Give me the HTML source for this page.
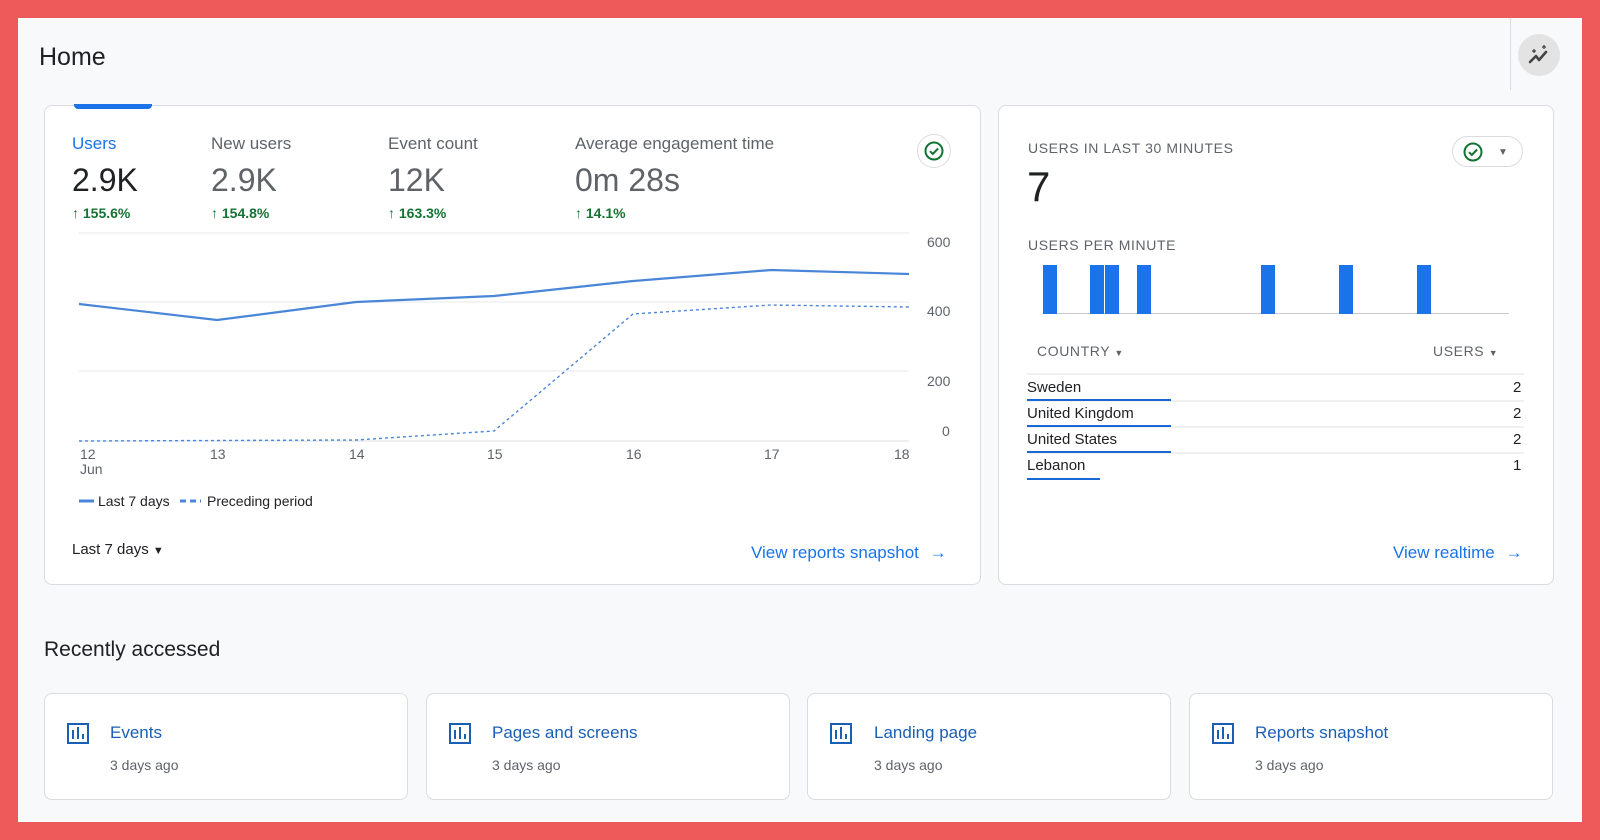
<!DOCTYPE html>
<html><head><meta charset="utf-8"><style>
*{margin:0;padding:0;box-sizing:border-box}
body{width:1600px;height:840px;background:#ee5a5a;font-family:"Liberation Sans",Arial,sans-serif;position:relative;overflow:hidden}
.a{position:absolute;white-space:nowrap}
#bg{position:absolute;left:18px;top:18px;width:1564px;height:804px;background:#f8f9fa}
.card{position:absolute;background:#fff;border:1px solid #dadce0;border-radius:8px}
.lbl{font-size:17px;color:#5f6368}
.val{font-size:32px;color:#5f6368}
.chg{font-size:14px;color:#137333;font-weight:bold}
.blue{color:#1a73e8}
.cap{font-size:14px;color:#5f6368;letter-spacing:.6px}
.row{font-size:15px;color:#202124}
</style></head><body>
<div id="bg"></div>
<div class="a" style="left:39px;top:43px;font-size:25px;color:#202124">Home</div>
<div class="a" style="left:1510px;top:18px;width:1px;height:72px;background:#dadce0"></div>
<div class="a" style="left:1518px;top:34px;width:42px;height:42px;border-radius:50%;background:#e3e3e3"></div>
<svg class="a" style="left:1526px;top:42px" width="26" height="26" viewBox="0 0 26 26"><path d="M4 20l6-6 3 4 7-8" fill="none" stroke="#444" stroke-width="2.6" stroke-linecap="round" stroke-linejoin="round"/><path d="M8 7v4M6 9h4M18 3v4M16 5h4" stroke="#444" stroke-width="1.3"/></svg>

<div class="card" style="left:44px;top:105px;width:937px;height:480px"></div>
<div class="a" style="left:74px;top:104px;width:78px;height:5px;background:#1a73e8;border-radius:0 0 4px 4px"></div>
<div class="a lbl blue" style="left:72px;top:134px;color:#1a73e8">Users</div>
<div class="a lbl" style="left:211px;top:134px">New users</div>
<div class="a lbl" style="left:388px;top:134px">Event count</div>
<div class="a lbl" style="left:575px;top:134px">Average engagement time</div>
<div class="a val" style="left:72px;top:162px;color:#202124">2.9K</div>
<div class="a val" style="left:211px;top:162px">2.9K</div>
<div class="a val" style="left:388px;top:162px">12K</div>
<div class="a val" style="left:575px;top:162px">0m 28s</div>
<div class="a chg" style="left:72px;top:205px">↑ 155.6%</div>
<div class="a chg" style="left:211px;top:205px">↑ 154.8%</div>
<div class="a chg" style="left:388px;top:205px">↑ 163.3%</div>
<div class="a chg" style="left:575px;top:205px">↑ 14.1%</div>
<div class="a" style="left:917px;top:134px;width:34px;height:34px;border-radius:50%;border:1px solid #dadce0"></div>
<svg class="a" style="left:923px;top:140px" width="22" height="22" viewBox="0 0 22 22"><circle cx="11" cy="11" r="8.5" fill="none" stroke="#137333" stroke-width="2"/><path d="M7 11.2l2.8 2.8 5.3-5.5" fill="none" stroke="#137333" stroke-width="2"/></svg>

<svg class="a" style="left:0;top:0" width="1600" height="840">
<g stroke="#e8eaed" stroke-width="1"><line x1="79" y1="233" x2="909" y2="233"/><line x1="79" y1="302" x2="909" y2="302"/><line x1="79" y1="371" x2="909" y2="371"/><line x1="79" y1="441" x2="909" y2="441" stroke="#dadce0"/></g>
<polyline points="79,304 217,320 356,302 494,296 633,281 771,270 909,274" fill="none" stroke="#4a86d8" stroke-width="2.2"/>
<polyline points="79,441 356,440 494,431 633,314 771,305 909,307" fill="none" stroke="#4a86d8" stroke-width="1.4" stroke-dasharray="3,3"/>
<g font-size="14" fill="#5f6368" font-family="Liberation Sans, sans-serif"><text x="927" y="247">600</text><text x="927" y="316">400</text><text x="927" y="386">200</text><text x="942" y="436">0</text>
<text x="80" y="459">12</text><text x="80" y="474">Jun</text><text x="210" y="459">13</text><text x="349" y="459">14</text><text x="487" y="459">15</text><text x="626" y="459">16</text><text x="764" y="459">17</text><text x="894" y="459">18</text></g>
<line x1="79" y1="501" x2="94" y2="501" stroke="#4a86d8" stroke-width="3"/>
<line x1="180" y1="501" x2="201" y2="501" stroke="#4a86d8" stroke-width="3" stroke-dasharray="6,4"/>
</svg>
<div class="a" style="left:98px;top:493px;font-size:14px;color:#202124">Last 7 days</div>
<div class="a" style="left:207px;top:493px;font-size:14px;color:#202124">Preceding period</div>
<div class="a" style="left:72px;top:541px;font-size:15px;color:#202124">Last 7 days <span style="font-size:11px">▼</span></div>
<div class="a" style="left:751px;top:543px;font-size:17px;color:#1a73e8">View reports snapshot <span style="margin-left:6px">→</span></div>

<div class="card" style="left:998px;top:105px;width:556px;height:480px"></div>
<div class="a cap" style="left:1028px;top:140px">USERS IN LAST 30 MINUTES</div>
<div class="a" style="left:1027px;top:163px;font-size:42px;color:#202124">7</div>
<div class="a" style="left:1452px;top:136px;width:71px;height:31px;border-radius:16px;border:1px solid #dadce0"></div>
<svg class="a" style="left:1462px;top:141px" width="22" height="22" viewBox="0 0 22 22"><circle cx="11" cy="11" r="8.5" fill="none" stroke="#137333" stroke-width="2"/><path d="M7 11.2l2.8 2.8 5.3-5.5" fill="none" stroke="#137333" stroke-width="2"/></svg>
<div class="a" style="left:1498px;top:147px;font-size:10px;color:#5f6368">▼</div>
<div class="a cap" style="left:1028px;top:237px">USERS PER MINUTE</div>
<svg class="a" style="left:0;top:0" width="1600" height="840">
<line x1="1043" y1="313.5" x2="1509" y2="313.5" stroke="#c8cbd0" stroke-width="1"/>
<g fill="#1a73e8"><rect x="1043" y="265" width="14" height="49"/><rect x="1090" y="265" width="14" height="49"/><rect x="1105" y="265" width="14" height="49"/><rect x="1137" y="265" width="14" height="49"/><rect x="1261" y="265" width="14" height="49"/><rect x="1339" y="265" width="14" height="49"/><rect x="1417" y="265" width="14" height="49"/></g>
<g stroke="#e0e0e0"><line x1="1027" y1="374" x2="1524" y2="374"/><line x1="1027" y1="401" x2="1524" y2="401"/><line x1="1027" y1="427" x2="1524" y2="427"/><line x1="1027" y1="453" x2="1524" y2="453"/></g>
<g fill="#1967d2"><rect x="1027" y="399" width="144" height="2"/><rect x="1027" y="425" width="144" height="2"/><rect x="1027" y="451" width="144" height="2"/><rect x="1027" y="478" width="73" height="2"/></g>
</svg>
<div class="a cap" style="left:1037px;top:343px;font-size:14px">COUNTRY <span style="font-size:9px">▼</span></div>
<div class="a cap" style="left:1433px;top:343px;font-size:14px">USERS <span style="font-size:9px">▼</span></div>
<div class="a row" style="left:1027px;top:379px">Sweden</div><div class="a row" style="left:1513px;top:379px">2</div>
<div class="a row" style="left:1027px;top:405px">United Kingdom</div><div class="a row" style="left:1513px;top:405px">2</div>
<div class="a row" style="left:1027px;top:431px">United States</div><div class="a row" style="left:1513px;top:431px">2</div>
<div class="a row" style="left:1027px;top:457px">Lebanon</div><div class="a row" style="left:1513px;top:457px">1</div>
<div class="a" style="left:1393px;top:543px;font-size:17px;color:#1a73e8">View realtime <span style="margin-left:6px">→</span></div>

<div class="a" style="left:44px;top:638px;font-size:21px;color:#202124">Recently accessed</div>
<div class="card" style="left:44px;top:693px;width:364px;height:107px"></div>
<div class="card" style="left:426px;top:693px;width:364px;height:107px"></div>
<div class="card" style="left:807px;top:693px;width:364px;height:107px"></div>
<div class="card" style="left:1189px;top:693px;width:364px;height:107px"></div>
<svg class="a" style="left:0;top:0" width="1600" height="840"><g fill="none" stroke="#1a5fb4" stroke-width="2">
<rect x="68" y="724" width="20" height="19"/><rect x="450" y="724" width="20" height="19"/><rect x="831" y="724" width="20" height="19"/><rect x="1213" y="724" width="20" height="19"/></g>
<g fill="#1a5fb4"><rect x="72" y="730" width="2" height="9"/><rect x="77" y="727" width="2" height="12"/><rect x="82" y="734" width="2" height="5"/>
<rect x="454" y="730" width="2" height="9"/><rect x="459" y="727" width="2" height="12"/><rect x="464" y="734" width="2" height="5"/>
<rect x="835" y="730" width="2" height="9"/><rect x="840" y="727" width="2" height="12"/><rect x="845" y="734" width="2" height="5"/>
<rect x="1217" y="730" width="2" height="9"/><rect x="1222" y="727" width="2" height="12"/><rect x="1227" y="734" width="2" height="5"/></g></svg>
<div class="a" style="left:110px;top:723px;font-size:17px;color:#1a5fb4">Events</div>
<div class="a" style="left:492px;top:723px;font-size:17px;color:#1a5fb4">Pages and screens</div>
<div class="a" style="left:874px;top:723px;font-size:17px;color:#1a5fb4">Landing page</div>
<div class="a" style="left:1255px;top:723px;font-size:17px;color:#1a5fb4">Reports snapshot</div>
<div class="a" style="left:110px;top:757px;font-size:14px;color:#5f6368">3 days ago</div>
<div class="a" style="left:492px;top:757px;font-size:14px;color:#5f6368">3 days ago</div>
<div class="a" style="left:874px;top:757px;font-size:14px;color:#5f6368">3 days ago</div>
<div class="a" style="left:1255px;top:757px;font-size:14px;color:#5f6368">3 days ago</div>
</body></html>
